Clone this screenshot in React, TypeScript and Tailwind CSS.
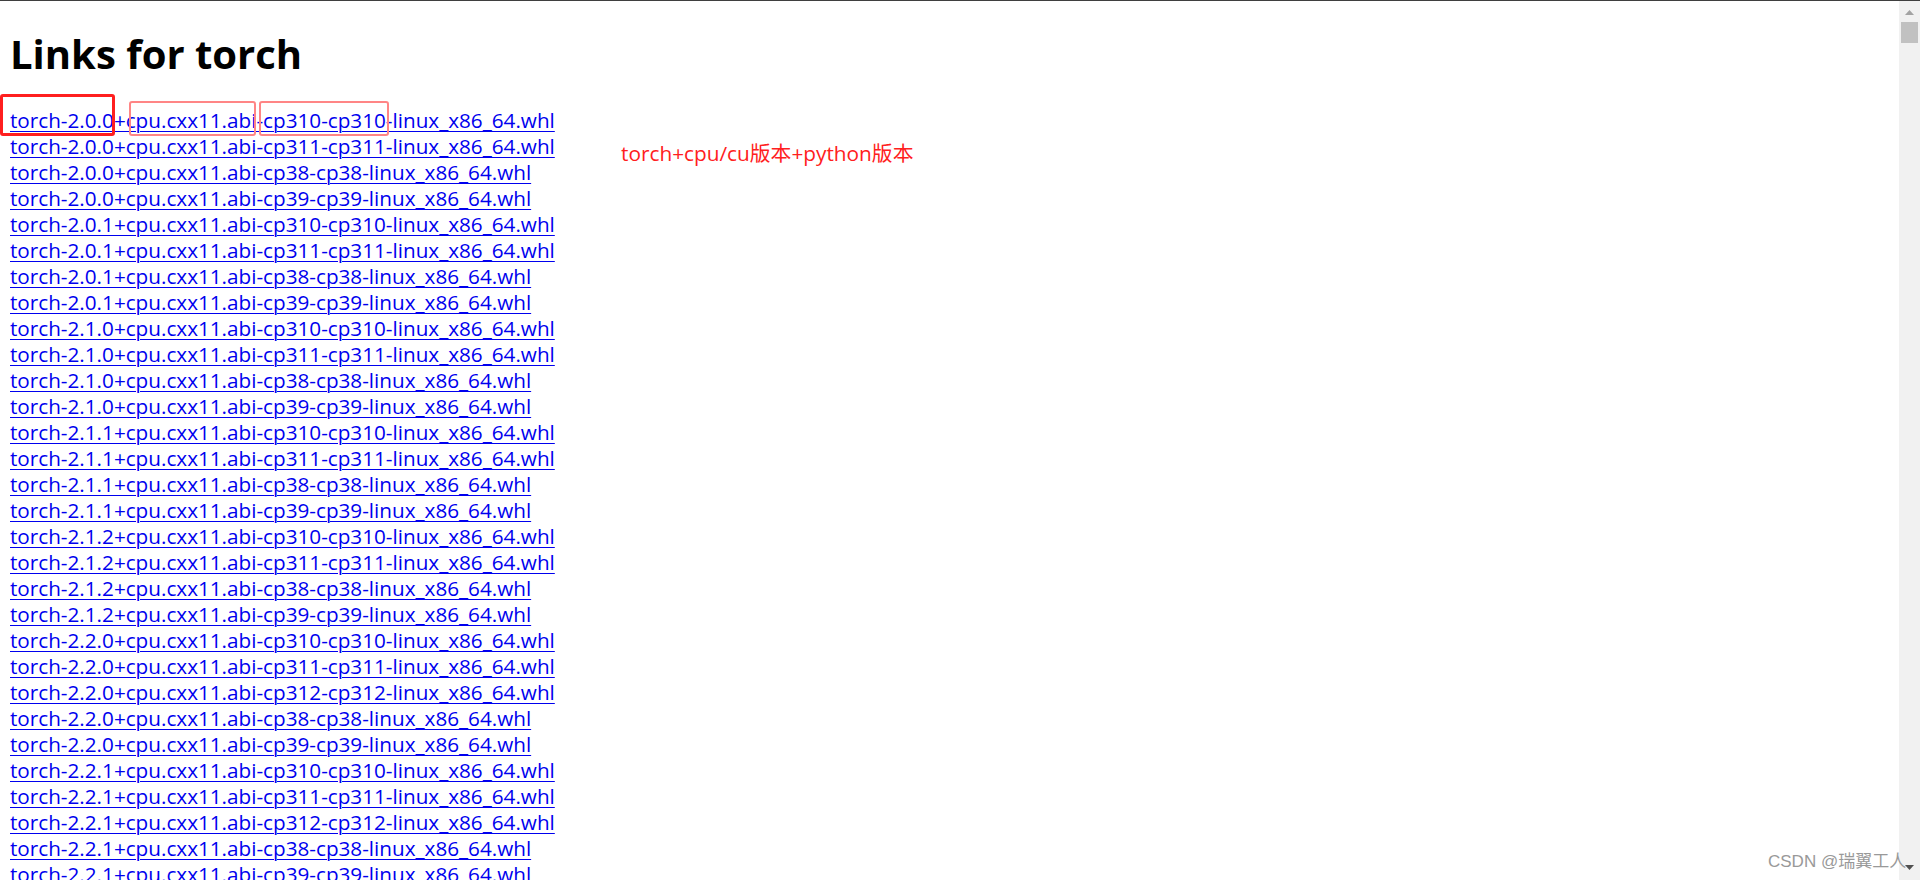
import React from "react";

const versions: { v: string; py: string[] }[] = [
  { v: "2.0.0", py: ["cp310", "cp311", "cp38", "cp39"] },
  { v: "2.0.1", py: ["cp310", "cp311", "cp38", "cp39"] },
  { v: "2.1.0", py: ["cp310", "cp311", "cp38", "cp39"] },
  { v: "2.1.1", py: ["cp310", "cp311", "cp38", "cp39"] },
  { v: "2.1.2", py: ["cp310", "cp311", "cp38", "cp39"] },
  { v: "2.2.0", py: ["cp310", "cp311", "cp312", "cp38", "cp39"] },
  { v: "2.2.1", py: ["cp310", "cp311", "cp312", "cp38", "cp39"] },
];

const files: string[] = versions.flatMap(({ v, py }) =>
  py.map((p) => `torch-${v}+cpu.cxx11.abi-${p}-${p}-linux_x86_64.whl`)
);

export default function App() {
  return (
    <div className="relative flex h-[880px] w-[1920px] overflow-hidden border-t border-[#3f3f3f] bg-white font-['Open_Sans','Noto_Sans_CJK_SC',sans-serif]">
      <main className="flex-1 pl-[10px]">
        <h1 className="mt-[26px] mb-[27px] text-[40px] leading-[53px] font-bold text-black">
          Links for torch
        </h1>
        <div className="flex flex-col items-start">
          {files.map((f) => (
            <a
              key={f}
              href="#"
              className="text-[20.7px] leading-[26px] text-[#0000ee] underline decoration-1 underline-offset-[3px]"
            >
              {f}
            </a>
          ))}
        </div>
      </main>

      <div className="flex w-[21px] flex-col items-center bg-[#f1f1f1] pt-[9px] pb-[10px]">
        <svg width="9" height="5" viewBox="0 0 9 5">
          <polygon points="4.5,0 9,5 0,5" fill="#a3a3a3" />
        </svg>
        <div className="mt-[7px] h-[21px] w-[17px] bg-[#c1c1c1]" />
        <div className="flex-1" />
        <svg width="9" height="5" viewBox="0 0 9 5">
          <polygon points="0,0 9,0 4.5,5" fill="#505050" />
        </svg>
      </div>

      {/* annotations */}
      <div className="pointer-events-none absolute left-0 top-[93px] h-[42px] w-[115px] rounded-[3px] border-[3px] border-[#ff1f1f]" />
      <div className="pointer-events-none absolute left-[129px] top-[100px] h-[35px] w-[127px] rounded-[3px] border-2 border-[#ff8585]" />
      <div className="pointer-events-none absolute left-[259px] top-[100px] h-[35px] w-[130px] rounded-[3px] border-2 border-[#ff8585]" />
      <div className="absolute left-[621px] top-[139px] text-[20.8px] leading-[26px] text-[#ff2020]">
        torch+cpu/cu版本+python版本
      </div>
      <div className="absolute left-[1768px] top-[851px] font-['Liberation_Sans','Noto_Sans_CJK_SC',sans-serif] text-[17px] leading-[20px] text-[#999999]">
        CSDN @瑞翼工人
      </div>
    </div>
  );
}
